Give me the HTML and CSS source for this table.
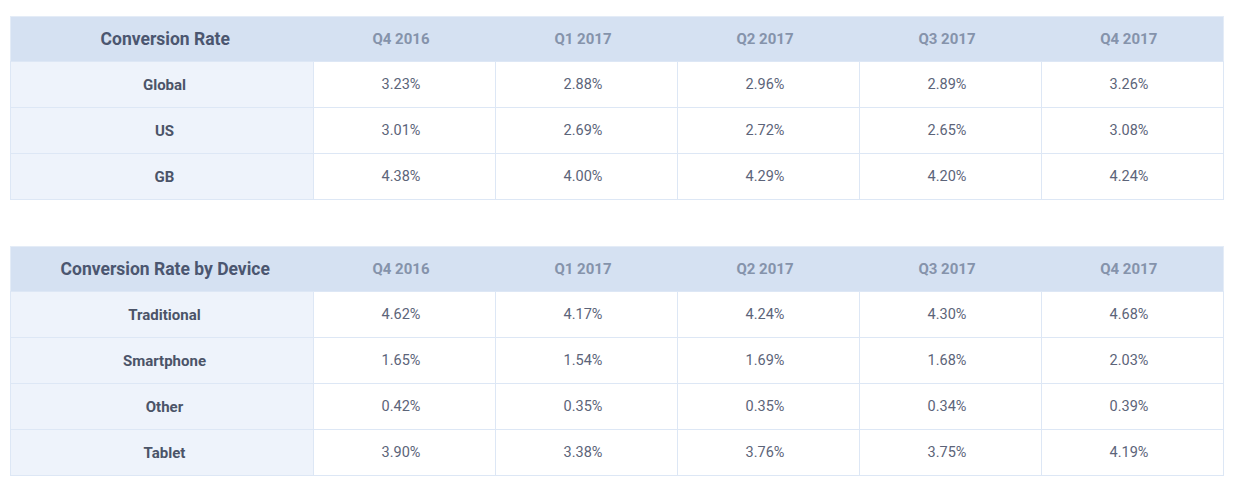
FILE: index.html
```html
<!DOCTYPE html>
<html>
<head>
<meta charset="utf-8">
<link rel="stylesheet" href="styles.css">
</head>
<body>
<div class="page">
  <table class="rates">
    <colgroup><col class="c-label"><col class="c-q"><col class="c-q"><col class="c-q"><col class="c-q"><col class="c-q"></colgroup>
    <thead>
      <tr><th class="label">Conversion Rate</th><th>Q4 2016</th><th>Q1 2017</th><th>Q2 2017</th><th>Q3 2017</th><th>Q4 2017</th></tr>
    </thead>
    <tbody>
      <tr><td class="label">Global</td><td>3.23%</td><td>2.88%</td><td>2.96%</td><td>2.89%</td><td>3.26%</td></tr>
      <tr><td class="label">US</td><td>3.01%</td><td>2.69%</td><td>2.72%</td><td>2.65%</td><td>3.08%</td></tr>
      <tr><td class="label">GB</td><td>4.38%</td><td>4.00%</td><td>4.29%</td><td>4.20%</td><td>4.24%</td></tr>
    </tbody>
  </table>
  <table class="rates">
    <colgroup><col class="c-label"><col class="c-q"><col class="c-q"><col class="c-q"><col class="c-q"><col class="c-q"></colgroup>
    <thead>
      <tr><th class="label">Conversion Rate by Device</th><th>Q4 2016</th><th>Q1 2017</th><th>Q2 2017</th><th>Q3 2017</th><th>Q4 2017</th></tr>
    </thead>
    <tbody>
      <tr><td class="label">Traditional</td><td>4.62%</td><td>4.17%</td><td>4.24%</td><td>4.30%</td><td>4.68%</td></tr>
      <tr><td class="label">Smartphone</td><td>1.65%</td><td>1.54%</td><td>1.69%</td><td>1.68%</td><td>2.03%</td></tr>
      <tr><td class="label">Other</td><td>0.42%</td><td>0.35%</td><td>0.35%</td><td>0.34%</td><td>0.39%</td></tr>
      <tr><td class="label">Tablet</td><td>3.90%</td><td>3.38%</td><td>3.76%</td><td>3.75%</td><td>4.19%</td></tr>
    </tbody>
  </table>
</div>
</body>
</html>
```
FILE: styles.css
```css
* { box-sizing: border-box; }
html, body { margin: 0; padding: 0; background: #ffffff; }
body { font-family: Roboto, "Liberation Sans", sans-serif; }
.page {
  display: flex;
  flex-direction: column;
  gap: 46px;
  padding: 16px 0 0 10px;
}
.rates {
  width: 1212px;
  border-collapse: collapse;
  table-layout: fixed;
  border: 1px solid #e4ecf7;
}
.c-label { width: 303px; }
.c-q { width: 182px; }
.rates th {
  height: 45px;
  background: #d5e1f2;
  color: #8593ab;
  font-weight: 700;
  font-size: 15px;
  text-align: center;
  padding: 0 7px 0 0;
}
.rates th.label {
  color: #4b5670;
  font-size: 17.5px;
  padding: 0 0 0 6px;
}
.rates td {
  height: 46px;
  border: 1px solid #dde7f5;
  text-align: center;
  color: #5c6479;
  font-size: 14.5px;
  padding: 0 7px 0 0;
  background: #ffffff;
}
.rates td.label {
  background: #eef3fb;
  color: #4b5468;
  font-weight: 700;
  font-size: 15px;
  padding: 0 0 0 5px;
}
```
